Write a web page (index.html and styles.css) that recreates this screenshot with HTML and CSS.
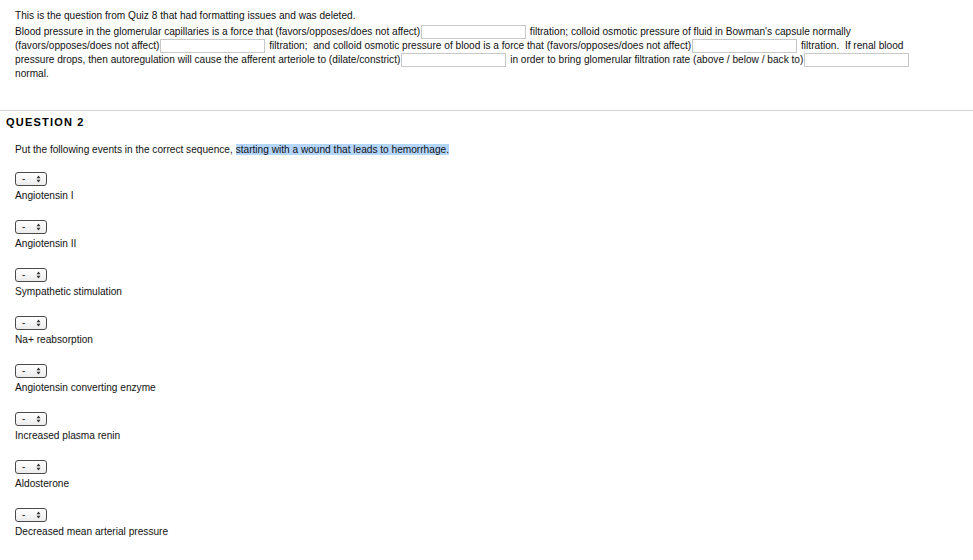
FILE: index.html
```html
<!DOCTYPE html>
<html lang="en">
  <head>
    <meta charset="UTF-8" />
    <meta name="viewport" content="width=device-width, initial-scale=1.0" />
    <title>Question 2</title>
    <link rel="stylesheet" href="styles.css">
  </head>
  <body>
    <div class="quiz-note">
      <p class="note-intro">This is the question from Quiz 8 that had formatting issues and was deleted.</p>
      <p class="note-body">
        Blood pressure in the glomerular capillaries is a force that (favors/opposes/does not affect)<input type="text" class="blank" /> filtration; colloid osmotic pressure of fluid in Bowman's capsule normally (favors/opposes/does not affect)<input type="text" class="blank" /> filtration;&nbsp; and colloid osmotic pressure of blood is a force that (favors/opposes/does not affect)<input type="text" class="blank" /> filtration.&nbsp; If renal blood pressure drops, then autoregulation will cause the afferent arteriole to (dilate/constrict)<input type="text" class="blank" /> in order to bring glomerular filtration rate (above / below / back to)<input type="text" class="blank" /> normal.
      </p>
    </div>

    <div class="question">
      <h3 class="question-title">QUESTION 2</h3>
      <p class="question-text">Put the following events in the correct sequence, <span class="selected">starting with a wound that leads to hemorrhage.</span></p>

      <ul class="sequence">
        <li>
          <span class="seq-select"><span class="seq-value">-</span><svg width="5" height="8" viewBox="0 0 5 8"><path d="M0.5 3.2 L2.5 0.5 L4.5 3.2 Z M0.5 4.8 L2.5 7.5 L4.5 4.8 Z" fill="#333"/></svg></span>
          <div class="seq-label">Angiotensin I</div>
        </li>
        <li>
          <span class="seq-select"><span class="seq-value">-</span><svg width="5" height="8" viewBox="0 0 5 8"><path d="M0.5 3.2 L2.5 0.5 L4.5 3.2 Z M0.5 4.8 L2.5 7.5 L4.5 4.8 Z" fill="#333"/></svg></span>
          <div class="seq-label">Angiotensin II</div>
        </li>
        <li>
          <span class="seq-select"><span class="seq-value">-</span><svg width="5" height="8" viewBox="0 0 5 8"><path d="M0.5 3.2 L2.5 0.5 L4.5 3.2 Z M0.5 4.8 L2.5 7.5 L4.5 4.8 Z" fill="#333"/></svg></span>
          <div class="seq-label">Sympathetic stimulation</div>
        </li>
        <li>
          <span class="seq-select"><span class="seq-value">-</span><svg width="5" height="8" viewBox="0 0 5 8"><path d="M0.5 3.2 L2.5 0.5 L4.5 3.2 Z M0.5 4.8 L2.5 7.5 L4.5 4.8 Z" fill="#333"/></svg></span>
          <div class="seq-label">Na+ reabsorption</div>
        </li>
        <li>
          <span class="seq-select"><span class="seq-value">-</span><svg width="5" height="8" viewBox="0 0 5 8"><path d="M0.5 3.2 L2.5 0.5 L4.5 3.2 Z M0.5 4.8 L2.5 7.5 L4.5 4.8 Z" fill="#333"/></svg></span>
          <div class="seq-label">Angiotensin converting enzyme</div>
        </li>
        <li>
          <span class="seq-select"><span class="seq-value">-</span><svg width="5" height="8" viewBox="0 0 5 8"><path d="M0.5 3.2 L2.5 0.5 L4.5 3.2 Z M0.5 4.8 L2.5 7.5 L4.5 4.8 Z" fill="#333"/></svg></span>
          <div class="seq-label">Increased plasma renin</div>
        </li>
        <li>
          <span class="seq-select"><span class="seq-value">-</span><svg width="5" height="8" viewBox="0 0 5 8"><path d="M0.5 3.2 L2.5 0.5 L4.5 3.2 Z M0.5 4.8 L2.5 7.5 L4.5 4.8 Z" fill="#333"/></svg></span>
          <div class="seq-label">Aldosterone</div>
        </li>
        <li>
          <span class="seq-select"><span class="seq-value">-</span><svg width="5" height="8" viewBox="0 0 5 8"><path d="M0.5 3.2 L2.5 0.5 L4.5 3.2 Z M0.5 4.8 L2.5 7.5 L4.5 4.8 Z" fill="#333"/></svg></span>
          <div class="seq-label">Decreased mean arterial pressure</div>
        </li>
      </ul>
    </div>
  </body>
</html>
```

FILE: styles.css
```css
body {
  font-family: "Liberation Sans", Arial, sans-serif;
  font-size: 10.15px;
  color: #111;
  margin: 0;
  padding: 0;
  background-color: #fff;
}
p {
  margin: 0;
}
.quiz-note {
  padding: 8px 58px 29px 15px;
  border-bottom: 1px solid #d4d4d4;
}
.note-intro {
  line-height: 16px;
}
.note-body {
  line-height: 14px;
  margin-top: 1px;
}
.blank {
  box-sizing: border-box;
  width: 105px;
  height: 14px;
  padding: 0;
  margin: 0 1px;
  border: 1px solid #c8c8c8;
  vertical-align: top;
  font-size: 9px;
}
.question {
  padding: 0 6px;
}
.question-title {
  margin: 5px 0 0 0;
  font-size: 11px;
  line-height: 13px;
  font-weight: bold;
  letter-spacing: 1.2px;
  color: #000;
}
.question-text {
  margin: 15px 0 0 9px;
  line-height: 12px;
}
.selected {
  background-color: #b4d5fe;
}
.sequence {
  list-style: none;
  margin: 16px 0 0 9px;
  padding: 0;
}
.sequence li {
  height: 48px;
}
.seq-select {
  display: inline-flex;
  align-items: center;
  justify-content: space-between;
  box-sizing: border-box;
  width: 32px;
  height: 14px;
  padding: 0 5px 0 6px;
  border: 1px solid #4a4a4a;
  border-radius: 3px;
  background: linear-gradient(#ffffff, #ececec);
  font-size: 10px;
  line-height: 1;
  vertical-align: top;
}
.seq-value {
  margin-top: -1px;
}
.seq-label {
  margin-top: 4px;
  line-height: 12px;
}
```
